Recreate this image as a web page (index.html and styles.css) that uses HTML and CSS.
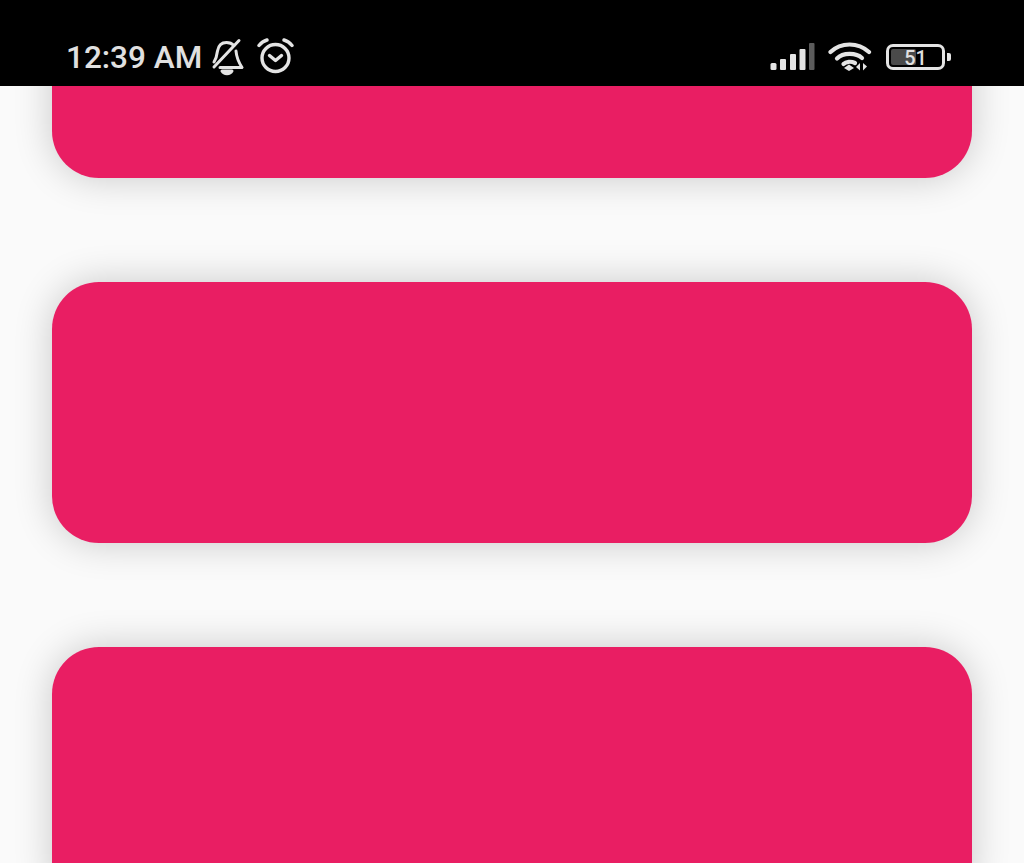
FILE: index.html
```html
<!DOCTYPE html>
<html lang="en">
<head>
    <meta charset="UTF-8">
    <meta name="viewport" content="width=device-width, initial-scale=1.0">
    <title>Cards</title>
    <link rel="stylesheet" href="styles.css">
</head>
<body>
    <div class="status-bar">
        <div class="status-left">
            <span class="clock">12:39 AM</span>
            <svg class="icon-bell" viewBox="0 0 34 38" fill="none" stroke="#e4e4e4" stroke-width="3" stroke-linecap="round" stroke-linejoin="round">
                <path d="M4 24 C6.500 20 7 17 7.500 13 C8.500 7 12 4.500 16.500 4.500 C19.500 4.500 22 5.500 24 7.500"/>
                <path d="M26 13 C26.500 19 28.500 24 32 29.500 L10 29.500"/>
                <path d="M4 29 L29 2.500"/>
                <path d="M12 33 C14 36.500 20 36.500 22 33 Z" fill="#e4e4e4"/>
            </svg>
            <svg class="icon-alarm" viewBox="0 0 38 38" fill="none" stroke="#e4e4e4" stroke-width="3.400" stroke-linecap="round" stroke-linejoin="round">
                <circle cx="18.500" cy="20" r="13.500"/>
                <path d="M12.500 17.500 L18.500 22.500 L24.500 17.500"/>
                <path d="M2 7.500 C4 5 6.500 3 10 2"/>
                <path d="M35 7.500 C33 5 30.500 3 27 2"/>
            </svg>
        </div>
        <div class="status-right">
            <svg class="icon-signal" viewBox="0 0 45 29">
                <rect x="0.500" y="21" width="6" height="7" rx="1.500" fill="#e4e4e4"/>
                <rect x="10" y="17" width="6" height="11" rx="1" fill="#e4e4e4"/>
                <rect x="20" y="12" width="6" height="16" rx="1" fill="#e4e4e4"/>
                <rect x="29.500" y="7" width="6" height="21" rx="1" fill="#e4e4e4"/>
                <rect x="39" y="1" width="5.500" height="27" rx="1" fill="#5c5c5c"/>
            </svg>
            <svg class="icon-wifi" viewBox="0 0 44 30" fill="none" stroke="#e4e4e4" stroke-width="4.200" stroke-linecap="round">
                <path d="M2.500 11 C13 1 30 1 41 11"/>
                <path d="M9 17.500 C15 11.500 28 11.500 34 17"/>
                <path d="M15.500 23 C18 20.500 23 20 27 22"/>
                <path d="M21 23.500 L26 27 L21 30 L16 27 Z" fill="#e4e4e4" stroke="none"/>
                <path d="M32 22 L32 29.500 L28 26 Z" fill="#e4e4e4" stroke="none"/>
                <path d="M35 29.500 L35 22 L39 25.500 Z" fill="#e4e4e4" stroke="none"/>
            </svg>
            <div class="battery">
                <div class="battery-body">
                    <div class="battery-level"></div>
                    <span class="battery-text">51</span>
                </div>
                <div class="battery-nub"></div>
            </div>
        </div>
    </div>

    <div class="card-view">
        <div class="card-list">
            <div class="card"></div>
            <div class="card"></div>
            <div class="card"></div>
        </div>
    </div>
</body>
</html>
```

FILE: styles.css
```css
* { margin: 0; padding: 0; box-sizing: border-box; }
html, body {
    height: 863px;
    overflow: hidden;
}
body {
    background: #fafafa;
    font-family: Roboto, 'Liberation Sans', sans-serif;
    display: flex;
    flex-direction: column;
}
.status-bar {
    flex: none;
    height: 86px;
    background: #000;
    color: #e4e4e4;
    display: flex;
    justify-content: space-between;
    align-items: flex-start;
    padding: 38px 73px 0 66px;
}
.status-left {
    display: flex;
    align-items: flex-start;
}
.clock {
    font-size: 31.500px;
    font-weight: 500;
    line-height: 39px;
    color: #e0e0e0;
}
.icon-bell {
    width: 34px;
    height: 38px;
    margin-left: 8px;
}
.icon-alarm {
    width: 38px;
    height: 38px;
    margin-left: 13px;
}
.status-right {
    display: flex;
    align-items: flex-start;
}
.icon-signal {
    width: 45px;
    height: 29px;
    margin-top: 4px;
}
.icon-wifi {
    width: 44px;
    height: 30px;
    margin-top: 3px;
    margin-left: 13px;
}
.battery {
    display: flex;
    align-items: center;
    margin-left: 14px;
    margin-top: 6px;
}
.battery-body {
    position: relative;
    width: 59px;
    height: 26px;
    border: 3px solid #e4e4e4;
    border-radius: 7px;
    padding: 2px;
}
.battery-level {
    width: 25px;
    height: 100%;
    background: #4a4a4a;
    border-radius: 2px;
}
.battery-text {
    position: absolute;
    top: 0;
    left: 0;
    width: 100%;
    text-align: center;
    font-size: 20px;
    font-weight: 500;
    line-height: 22px;
    color: #e0e0e0;
}
.battery-nub {
    width: 4px;
    height: 8px;
    margin-left: 2px;
    background: #e4e4e4;
    border-radius: 0 2px 2px 0;
}
.card-view {
    flex: 1;
    min-height: 0;
    overflow: hidden;
}
.card-list {
    display: flex;
    flex-direction: column;
    gap: 104px;
    padding: 0 52px;
    margin-top: -169px;
}
.card {
    flex: none;
    height: 261px;
    background: #e91e63;
    border-radius: 47px;
    box-shadow: 0 0 38px rgba(0, 0, 0, 0.2);
}
```
